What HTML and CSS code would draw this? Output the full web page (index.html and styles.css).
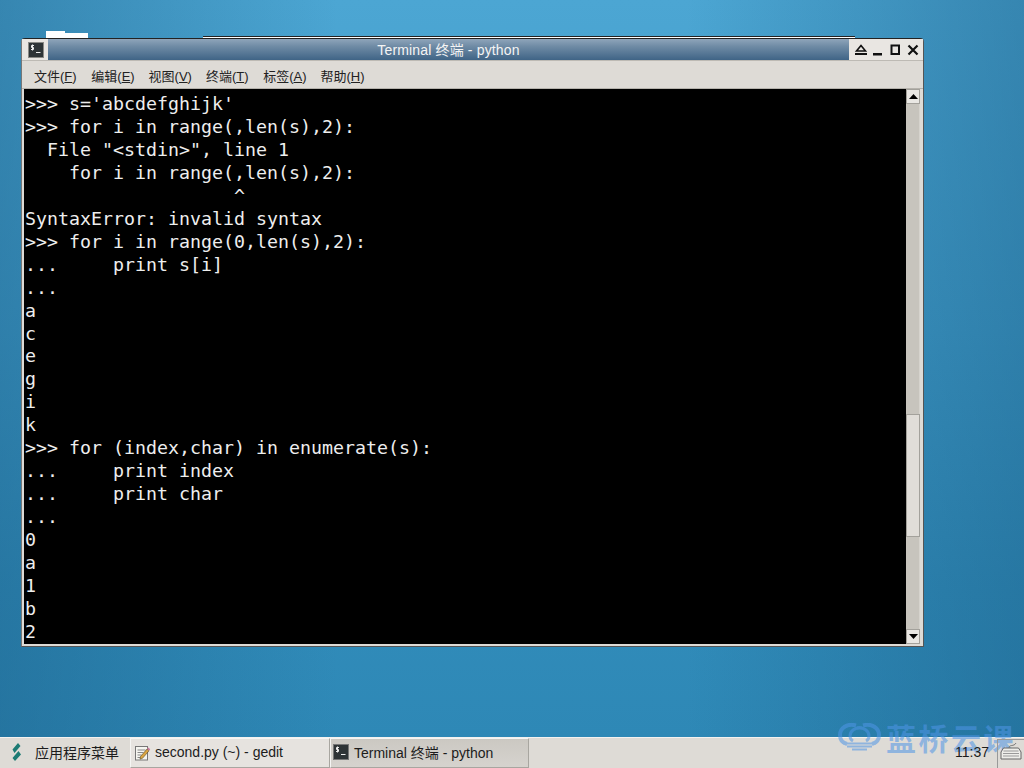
FILE: index.html
```html
<!DOCTYPE html>
<html lang="zh">
<head>
<meta charset="utf-8">
<title>Terminal 终端 - python</title>
<link rel="stylesheet" href="styles.css">
</head>
<body>
<div class="desktop">
  <div class="back-window back-a"></div>
  <div class="back-window back-a2"></div>
  <div class="back-window back-b"></div>
  <section class="window">
    <header class="titlebar">
      <div class="win-icon"><svg width="16" height="16" viewBox="0 0 16 16"><rect x="0.5" y="0.5" width="15" height="15" fill="#2e3436" stroke="#8a8a86"/><path d="M6 3.500H3.500V5.500H5.500V7.500H3M4.500 2.500V8.500M8 10.500h4.500" stroke="#eee" stroke-width="1" fill="none"/></svg></div>
      <div class="title">Terminal 终端 - python</div>
      <div class="win-buttons">
        <svg width="14" height="14" viewBox="0 0 14 14"><path d="M7 2.500L11.500 8H2.500Z" fill="none" stroke="#111" stroke-width="1.600"/><rect x="1" y="10" width="12" height="2" fill="#111"/></svg>
        <svg width="14" height="14" viewBox="0 0 14 14"><rect x="2" y="10" width="9" height="2.500" fill="#111"/></svg>
        <svg width="14" height="14" viewBox="0 0 14 14"><rect x="2.500" y="2.500" width="7.500" height="8.500" fill="none" stroke="#111" stroke-width="2"/></svg>
        <svg width="14" height="14" viewBox="0 0 14 14"><path d="M2.500 2.500L11.500 11.500M11.500 2.500L2.500 11.500" stroke="#111" stroke-width="2.200"/></svg>
      </div>
    </header>
    <nav class="menubar">
      <span class="menu">文件(<u>F</u>)</span>
      <span class="menu">编辑(<u>E</u>)</span>
      <span class="menu">视图(<u>V</u>)</span>
      <span class="menu">终端(<u>T</u>)</span>
      <span class="menu">标签(<u>A</u>)</span>
      <span class="menu">帮助(<u>H</u>)</span>
    </nav>
    <div class="term-area">
<pre class="terminal">&gt;&gt;&gt; s='abcdefghijk'
&gt;&gt;&gt; for i in range(,len(s),2):
  File "&lt;stdin&gt;", line 1
    for i in range(,len(s),2):
                   ^
SyntaxError: invalid syntax
&gt;&gt;&gt; for i in range(0,len(s),2):
...     print s[i]
... 
a
c
e
g
i
k
&gt;&gt;&gt; for (index,char) in enumerate(s):
...     print index
...     print char
... 
0
a
1
b
2</pre>
      <div class="scrollbar">
        <div class="arrow"><svg width="9" height="5" viewBox="0 0 9 5"><path d="M4.500 0L9 5H0Z" fill="#000"/></svg></div>
        <div class="track">
          <div class="spacer-top"></div>
          <div class="thumb"></div>
          <div class="spacer-bottom"></div>
        </div>
        <div class="arrow"><svg width="9" height="5" viewBox="0 0 9 5"><path d="M0 0H9L4.500 5Z" fill="#000"/></svg></div>
      </div>
    </div>
  </section>
</div>
<footer class="panel">
  <div class="app-menu">
    <svg width="9" height="18" viewBox="0 0 9 18"><path d="M6 0L0.500 6.500 2.500 10 8.500 3zM6.500 8L0.500 15 3 18 9 11.500z" fill="#1d7b74"/></svg>
    <span>应用程序菜单</span>
  </div>
  <div class="task task-a">
    <svg width="17" height="17" viewBox="0 0 17 17"><rect x="1.500" y="2.500" width="12" height="13.500" fill="#f5f5f0" stroke="#777"/><path d="M3.500 6h8M3.500 8.500h6M3.500 11h4M3.500 13.500h3" stroke="#888"/><path d="M6.500 12.500L13 5l2 1.800-6.500 7.500-2.500.8z" fill="#d9a441" stroke="#5b4a20" stroke-width=".6"/><path d="M13 5l1.200-1.400 2 1.700L15 6.800z" fill="#c9789c"/></svg>
    <span>second.py (~) - gedit</span>
  </div>
  <div class="task task-b">
    <svg width="16" height="16" viewBox="0 0 16 16"><rect x="0.500" y="0.500" width="15" height="15" fill="#2e3436" stroke="#777"/><path d="M6 3.500H3.500V5.500H5.500V7.500H3M4.500 2.500V8.500M8 10.500h4.500" stroke="#eee" fill="none"/></svg>
    <span>Terminal 终端 - python</span>
  </div>
  <div class="tray">
    <span class="clock">11:37</span>
    <div class="tray-icon"><svg width="22" height="20" viewBox="0 0 22 20"><path d="M1 10L3.500 6h15L21 10v7H1z" fill="#eeeeea" stroke="#666"/><path d="M3.500 9h15M3 11.500h16M3 14h16" stroke="#999"/><path d="M9 6c0-4 5-1 7-5" fill="none" stroke="#777"/></svg></div>
  </div>
</footer>
<div class="watermark">
  <svg class="wm-logo" width="43" height="28" viewBox="0 0 43 28"><g fill="none" stroke="#4f95e6"><path d="M18 2.500C9 0 2 5 2 12c0 5 3 8 7 9" stroke-width="4"/><path d="M25 2.500C34 0 41 5 41 12c0 5-3 8-7 9" stroke-width="4"/><path d="M24 5c-7-1-12 3-12 8 0 2 1 4 3 5" stroke-width="3"/><path d="M19 5c7-1 12 3 12 8 0 2-1 4-3 5" stroke-width="3"/></g><path d="M5 20.500h33M9 23.500h25M14 26.500h15" stroke="#4f95e6" stroke-width="2"/></svg>
  <span class="wm-text">蓝桥云课</span>
</div>
</body>
</html>
```
FILE: styles.css
```css
* { box-sizing: border-box; }
html, body { margin: 0; height: 100%; }
body {
  position: relative;
  width: 1024px;
  height: 768px;
  overflow: hidden;
  display: flex;
  flex-direction: column;
  font-family: "Liberation Sans", "Noto Sans CJK SC", sans-serif;
  background: #2b83ad;
}
.desktop {
  position: relative;
  height: 737px;
  flex: none;
  overflow: hidden;
  background:
    linear-gradient(90deg, rgba(24, 90, 130, .42) 0%, rgba(24, 90, 130, 0) 33%, rgba(24, 90, 130, 0) 67%, rgba(24, 90, 130, .42) 100%),
    linear-gradient(180deg, #4ca6d3 0%, #3f9ac8 45%, #318cba 80%, #2e88b6 100%);
}
.back-window { position: absolute; background: #fff; }
.back-a { left: 46px; top: 31px; width: 19px; height: 8px; }
.back-a2 { left: 65px; top: 33px; width: 23px; height: 6px; }
.back-b { left: 203px; top: 36px; width: 652px; height: 3px; border-top: 1px solid #222; }
.window {
  position: absolute;
  left: 21px;
  top: 38px;
  width: 903px;
  height: 609px;
  display: flex;
  flex-direction: column;
  background: #dedbd6;
  border: 1px solid #555;
  border-top-color: #222;
  border-left-color: #777;
  border-radius: 4px 4px 0 0;
}
.titlebar {
  height: 22px;
  flex: none;
  display: flex;
  align-items: stretch;
  border-bottom: 1px solid #bdbab4;
  background: #e9e6e2;
}
.win-icon { width: 26px; flex: none; display: flex; align-items: center; justify-content: center; padding-left: 1px; }
.title {
  flex: 1;
  background: linear-gradient(180deg, #8fa5ba 0%, #6f8ba5 35%, #3f6486 100%);
  color: #f4f4f4;
  font-size: 14px;
  letter-spacing: .15px;
  line-height: 23px;
  text-align: center;
}
.win-buttons {
  width: 74px;
  flex: none;
  display: flex;
  align-items: center;
  justify-content: space-between;
  padding: 0 3px 0 5px;
}
.menubar {
  height: 27px;
  flex: none;
  display: flex;
  align-items: center;
  gap: 10.3px;
  padding: 2px 0 0 12px;
  font-size: 13px;
  color: #222;
  background: #dedbd6;
}
.menu { width: 47px; white-space: nowrap; }
.term-area {
  flex: 1;
  display: flex;
  min-height: 0;
  padding: 0 3px 2px 2px;
  border-top: 1px solid #b5b2ac;
}
.terminal {
  flex: 1;
  margin: 0;
  padding: 4px 0 0 1px;
  background: #000;
  color: #eeeeee;
  font-family: "DejaVu Sans Mono", monospace;
  font-size: 18.27px;
  line-height: 22.96px;
  overflow: hidden;
}
.scrollbar {
  width: 14px;
  flex: none;
  display: flex;
  flex-direction: column;
  background: #c7c4bd;
  border-right: 1px solid #d6d3cd;
}
.arrow {
  height: 15px;
  flex: none;
  width: 14px;
  display: flex;
  align-items: center;
  justify-content: center;
  background: #e9e7e3;
  border: 1px solid #a3a19b;
}
.track { flex: 1; display: flex; flex-direction: column; }
.spacer-top { flex: 311 0 0; }
.thumb { flex: 122 0 0; width: 14px; background: #e0ddd8; border: 1px solid #a3a19b; }
.spacer-bottom { flex: 92 0 0; }
.watermark {
  position: absolute;
  left: 838px;
  top: 721px;
  height: 32px;
  display: flex;
  align-items: center;
  gap: 5px;
  opacity: .55;
}
.wm-text {
  color: #4f95e6;
  font-family: "Noto Sans CJK SC", sans-serif;
  font-weight: 700;
  font-size: 30px;
  line-height: 32px;
  letter-spacing: 2.500px;
  white-space: nowrap;
}
.panel {
  height: 31px;
  flex: none;
  display: flex;
  align-items: stretch;
  background: #dedbd6;
  border-top: 1px solid #f3f2f0;
  font-size: 14px;
  color: #1c1c1c;
}
.app-menu {
  width: 130px;
  flex: none;
  display: flex;
  align-items: center;
  gap: 14px;
  padding: 0 0 2px 12px;
}
.task {
  flex: none;
  display: flex;
  align-items: center;
  gap: 5px;
  padding: 0 0 2px 2px;
  border: 1px solid #a8a6a0;
  border-top-color: #f5f5f3;
  border-left-color: #f5f5f3;
  white-space: nowrap;
}
.task-a { width: 200px; background: #e6e3df; padding-left: 3px; gap: 4px; }
.task-b { width: 199px; background: linear-gradient(180deg, #cbc8c2, #d6d3ce); }
.tray { flex: 1; display: flex; align-items: stretch; justify-content: flex-end; }
.clock { position: relative; z-index: 1; align-self: center; margin-right: 8px; padding-bottom: 2px; }
.tray-icon { position: relative; z-index: 1; width: 27px; margin-top: 1px; padding: 2px 0 0 2px; border: 1px solid #999; border-right: 0; border-bottom: 0; }
```
